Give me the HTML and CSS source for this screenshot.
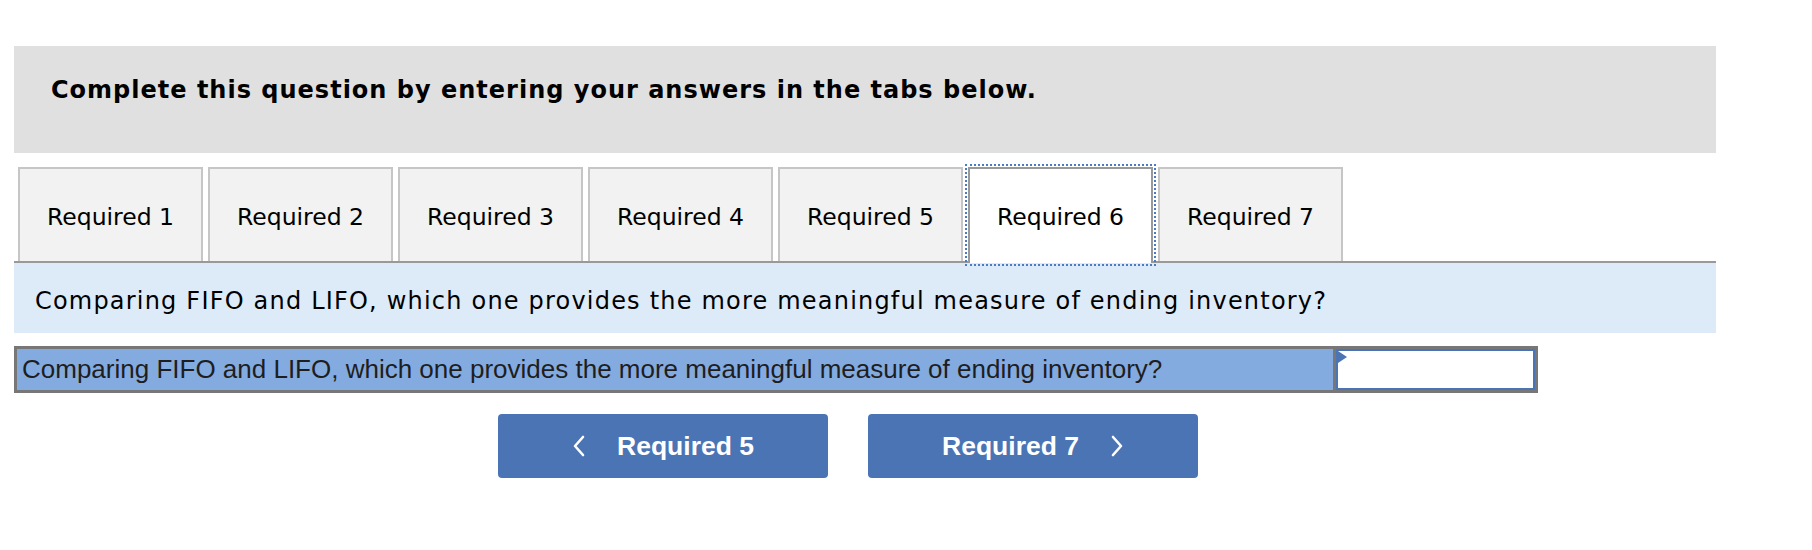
FILE: index.html
```html
<!DOCTYPE html>
<html lang="en">
<head>
<meta charset="utf-8">
<title>Required 6</title>
<link rel="stylesheet" href="styles.css">
</head>
<body>
<div class="page">
  <div class="intro">Complete this question by entering your answers in the tabs below.</div>

  <div class="tabs">
    <div class="tab">Required 1</div>
    <div class="tab">Required 2</div>
    <div class="tab">Required 3</div>
    <div class="tab">Required 4</div>
    <div class="tab">Required 5</div>
    <div class="tab tab-active">Required 6</div>
    <div class="tab">Required 7</div>
  </div>

  <div class="question">Comparing FIFO and LIFO, which one provides the more meaningful measure of ending inventory?</div>

  <div class="answer-row">
    <div class="answer-label">Comparing FIFO and LIFO, which one provides the more meaningful measure of ending inventory?</div>
    <div class="answer-input"><span class="flag"></span></div>
  </div>

  <div class="nav">
    <div class="nav-btn">
      <svg class="chev" viewBox="0 0 14 22" width="14" height="22"><polyline points="11,2 3,11 11,20" fill="none" stroke="#fff" stroke-width="2.6" stroke-linecap="round" stroke-linejoin="round"/></svg>
      <span>Required 5</span>
    </div>
    <div class="nav-btn">
      <span>Required 7</span>
      <svg class="chev" viewBox="0 0 14 22" width="14" height="22"><polyline points="3,2 11,11 3,20" fill="none" stroke="#fff" stroke-width="2.6" stroke-linecap="round" stroke-linejoin="round"/></svg>
    </div>
  </div>
</div>
</body>
</html>
```

FILE: styles.css
```css
* { box-sizing: border-box; }

body {
  margin: 0;
  background: #ffffff;
  font-family: "DejaVu Sans", Verdana, sans-serif;
  color: #000;
}

.page {
  width: 1702px;
  margin: 46px 0 0 14px;
}

.intro {
  height: 107px;
  background: #e0e0e0;
  padding: 30px 0 0 37px;
  font-weight: bold;
  font-size: 24px;
  letter-spacing: 1px;
  line-height: 28px;
}

.tabs {
  display: flex;
  gap: 5px;
  margin-top: 14px;
  padding-left: 4px;
  border-bottom: 2px solid #999999;
  height: 96px;
}

.tab {
  width: 185px;
  height: 94px;
  background: #f2f2f2;
  border: 2px solid #c6c6c6;
  border-bottom: none;
  display: flex;
  align-items: center;
  justify-content: center;
  padding-top: 4px;
  font-size: 23.5px;
  color: #000;
}

.tab-active {
  background: #ffffff;
  border-color: #999999;
  height: 96px;
  padding-bottom: 2px;
  outline: 2px dotted #4a7cc6;
  outline-offset: 1px;
}

.question {
  height: 70px;
  background: #ddebf8;
  padding: 24px 21px 0 21px;
  font-size: 24px;
  letter-spacing: 1.2px;
  line-height: 28px;
}

.answer-row {
  display: flex;
  width: 1524px;
  height: 47px;
  margin-top: 13px;
  border: 3px solid #777777;
}

.answer-label {
  width: 1319px;
  background: #84abe0;
  border-right: 3px solid #777777;
  padding-left: 5px;
  font-family: "Liberation Sans", Arial, sans-serif;
  font-size: 26px;
  line-height: 40px;
  color: #1e1e1e;
  white-space: nowrap;
}

.answer-input {
  position: relative;
  flex: 1;
  background: #ffffff;
  border: 2px solid #4a74b4;
}

.flag {
  position: absolute;
  left: 0;
  top: 0;
  width: 0;
  height: 0;
  border-left: 9px solid #4a74b4;
  border-top: 6px solid transparent;
  border-bottom: 6px solid transparent;
}

.nav {
  display: flex;
  gap: 40px;
  margin-top: 21px;
  padding-left: 484px;
}

.nav-btn {
  width: 330px;
  height: 64px;
  background: #4a74b4;
  border-radius: 4px;
  display: flex;
  align-items: center;
  justify-content: center;
  gap: 31px;
  color: #ffffff;
  font-family: "Liberation Sans", Arial, sans-serif;
  font-weight: bold;
  font-size: 26.5px;
}

.chev { display: block; }
```
